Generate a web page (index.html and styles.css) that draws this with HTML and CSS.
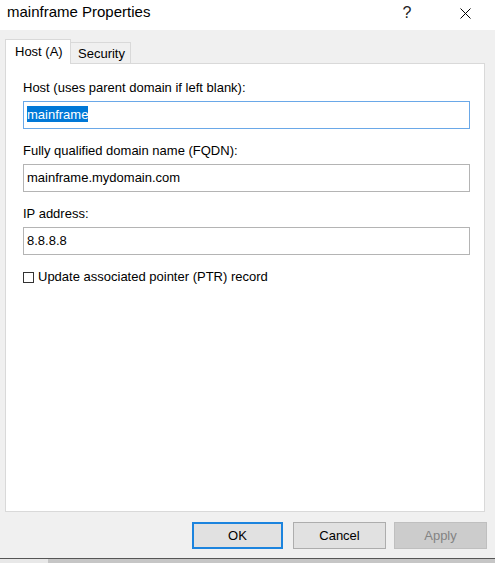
FILE: index.html
```html
<!DOCTYPE html>
<html>
<head>
<meta charset="utf-8">
<link rel="stylesheet" href="styles.css">
</head>
<body>
<div class="window">
  <div class="titlebar">
    <span class="title">mainframe Properties</span>
    <span class="spacer"></span>
    <span class="tb-btn help">?</span>
    <span class="tb-btn close">
      <svg width="11" height="11" viewBox="0 0 11 11"><path d="M0.5 0.5 L10.5 10.5 M10.5 0.5 L0.5 10.5" stroke="#000" stroke-width="1" fill="none"/></svg>
    </span>
  </div>
  <div class="dialog">
    <div class="tabs">
      <div class="tab selected">Host (A)</div>
      <div class="tab">Security</div>
    </div>
    <div class="panel">
      <div class="field">
        <div class="label">Host (uses parent domain if left blank):</div>
        <div class="input focused"><span class="sel">mainframe</span></div>
      </div>
      <div class="field">
        <div class="label">Fully qualified domain name (FQDN):</div>
        <div class="input">mainframe.mydomain.com</div>
      </div>
      <div class="field">
        <div class="label">IP address:</div>
        <div class="input">8.8.8.8</div>
      </div>
      <div class="check-row">
        <span class="checkbox"></span>
        <span class="check-label">Update associated pointer (PTR) record</span>
      </div>
    </div>
    <div class="buttons">
      <div class="btn default">OK</div>
      <div class="btn">Cancel</div>
      <div class="btn disabled">Apply</div>
    </div>
  </div>
  <div class="taskline"></div>
  <div class="taskstrip">
    <div class="strip-left"></div>
    <div class="strip-right"></div>
  </div>
</div>
</body>
</html>
```

FILE: styles.css
```css
html, body {
  margin: 0;
  padding: 0;
  background: #f0f0f0;
}
body {
  font-family: "Liberation Sans", Arial, sans-serif;
  font-size: 13px;
  color: #000;
}
.window {
  width: 495px;
  height: 563px;
  overflow: hidden;
}
.titlebar {
  height: 30px;
  background: #fff;
  display: flex;
  align-items: flex-start;
  padding-left: 7px;
  padding-right: 7px;
  box-sizing: border-box;
}
.title {
  font-size: 15px;
  line-height: 24px;
}
.spacer { flex: 1; }
.tb-btn {
  width: 46px;
  height: 26px;
  display: flex;
  justify-content: center;
  align-items: center;
}
.help {
  font-size: 16px;
  margin-right: 12px;
  color: #222;
}
.close svg { display: block; margin-top: 1px; }
.dialog {
  height: 528px;
  background: #f0f0f0;
  padding-top: 9px;
  box-sizing: border-box;
  display: flex;
  flex-direction: column;
}
.tabs {
  display: flex;
  align-items: flex-end;
  margin-left: 5px;
  height: 25px;
  margin-bottom: -1px;
}
.tab {
  box-sizing: border-box;
  border: 1px solid #d9d9d9;
  border-bottom: none;
  line-height: 16px;
}
.tab.selected {
  width: 66px;
  height: 25px;
  background: #fff;
  padding-left: 9px;
  padding-top: 4px;
  position: relative;
  z-index: 1;
}
.tab:not(.selected) {
  width: 60px;
  height: 21px;
  margin-bottom: 1px;
  border-left: none;
  padding-left: 7px;
  padding-top: 3px;
  background: #f0f0f0;
}
.panel {
  margin-left: 5px;
  width: 480px;
  height: 449px;
  box-sizing: border-box;
  background: #fff;
  border: 1px solid #d9d9d9;
  padding: 16px 0 0 17px;
}
.field {
  margin-bottom: 14px;
}
.label {
  line-height: 16px;
  margin-bottom: 5px;
}
.input {
  width: 447px;
  height: 28px;
  box-sizing: border-box;
  border: 1px solid #b4b4b4;
  padding-left: 3px;
  line-height: 26px;
  white-space: nowrap;
}
.input.focused {
  border-color: #6aa8e8;
}
.sel {
  display: inline-block;
  background: #0078d7;
  color: #fff;
  line-height: 14px;
  padding-top: 2px;
  vertical-align: baseline;
}
.check-row {
  display: flex;
  align-items: center;
  height: 16px;
  margin-top: 1px;
}
.checkbox {
  width: 11px;
  height: 11px;
  box-sizing: border-box;
  border: 1px solid #333;
  background: #fff;
  margin-right: 4px;
  margin-top: 1px;
}
.check-label {
  line-height: 16px;
}
.buttons {
  display: flex;
  justify-content: flex-end;
  margin-top: 10px;
  padding-right: 8px;
}
.btn {
  width: 93px;
  height: 27px;
  box-sizing: border-box;
  display: flex;
  justify-content: center;
  align-items: center;
  background: #e1e1e1;
  border: 1px solid #adadad;
  margin-left: 8px;
}
.btn.default {
  width: 91px;
  border: 2px solid #1c84de;
  margin-right: 2px;
}
.btn.disabled {
  background: #cccccc;
  border-color: #bfbfbf;
  color: #838383;
}
.taskline {
  height: 1px;
  background: #555;
}
.taskstrip {
  display: flex;
  height: 4px;
}
.strip-left {
  width: 48px;
  background: #e8e8e8;
}
.strip-right {
  flex: 1;
  background: #c6c6c6;
}
```
